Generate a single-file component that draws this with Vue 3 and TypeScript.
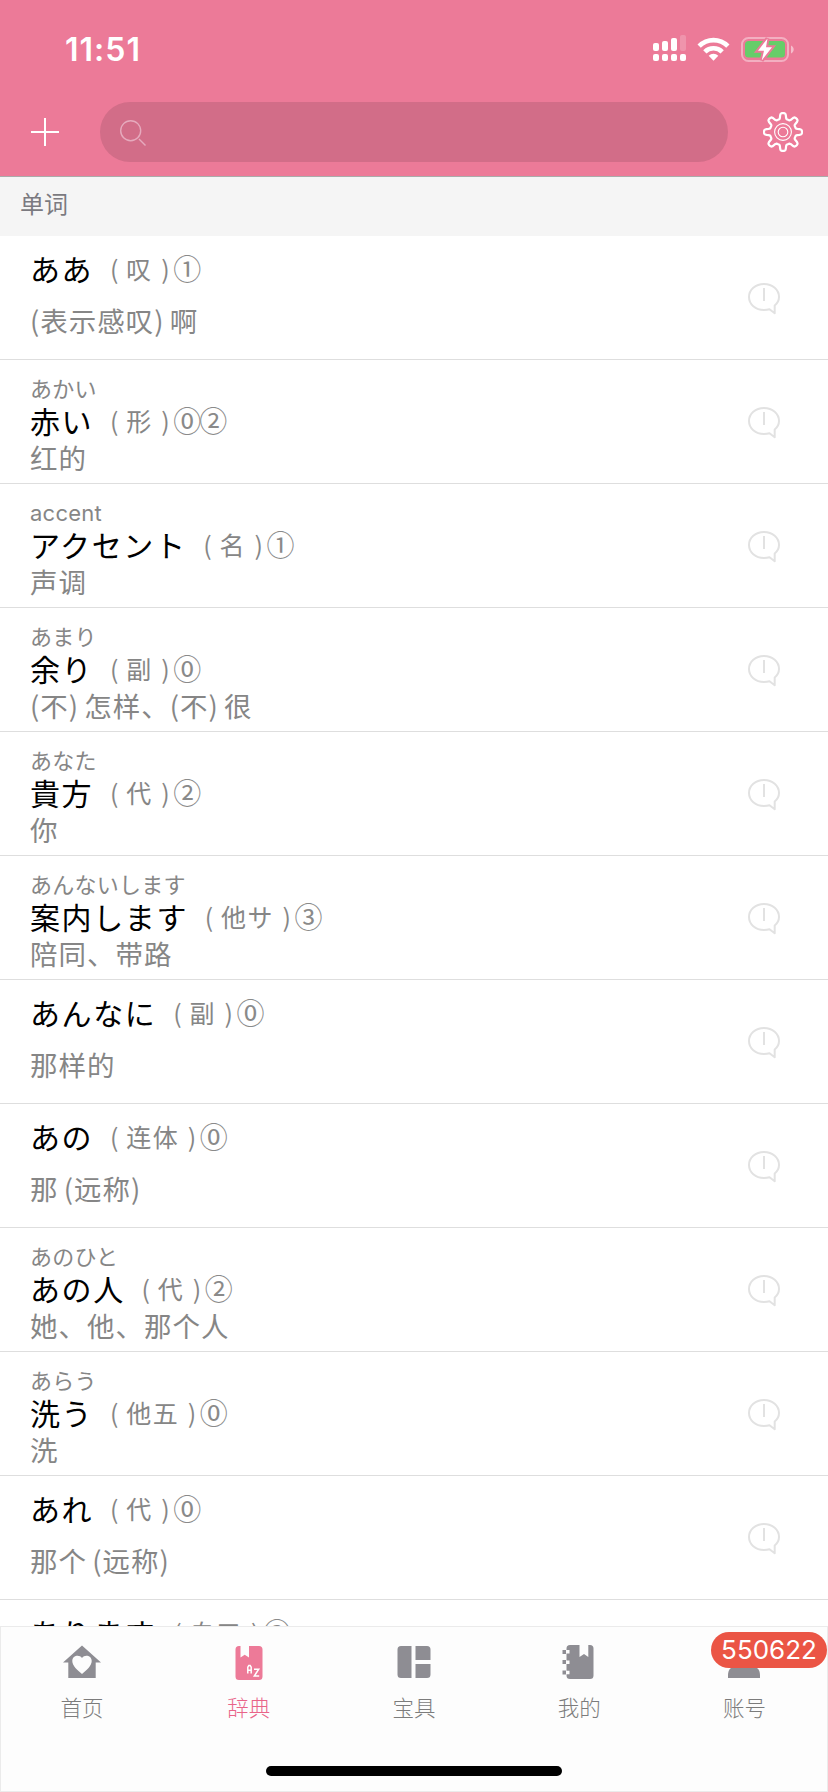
<script setup lang="ts">
interface Entry {
  kana?: string
  word: string
  kind: string
  tone: string
  meaning?: string
}

const entries: Entry[] = [
  { word: 'ああ', kind: '叹', tone: '①', meaning: '(表示感叹) 啊' },
  { kana: 'あかい', word: '赤い', kind: '形', tone: '⓪②', meaning: '红的' },
  { kana: 'accent', word: 'アクセント', kind: '名', tone: '①', meaning: '声调' },
  { kana: 'あまり', word: '余り', kind: '副', tone: '⓪', meaning: '(不) 怎样、(不) 很' },
  { kana: 'あなた', word: '貴方', kind: '代', tone: '②', meaning: '你' },
  { kana: 'あんないします', word: '案内します', kind: '他サ', tone: '③', meaning: '陪同、带路' },
  { word: 'あんなに', kind: '副', tone: '⓪', meaning: '那样的' },
  { word: 'あの', kind: '连体', tone: '⓪', meaning: '那 (远称)' },
  { kana: 'あのひと', word: 'あの人', kind: '代', tone: '②', meaning: '她、他、那个人' },
  { kana: 'あらう', word: '洗う', kind: '他五', tone: '⓪', meaning: '洗' },
  { word: 'あれ', kind: '代', tone: '⓪', meaning: '那个 (远称)' },
  { word: 'あります', kind: '自五', tone: '③' },
]

const gear = (() => {
  const pts: string[] = []
  for (let i = 0; i <= 360; i += 2) {
    const a = (i * Math.PI) / 180
    const wave = Math.tanh(2.4 * (Math.cos(8 * a) - 0.1)) / Math.tanh(2.4)
    const r = 16.1 + 2.9 * wave
    pts.push(`${(20 + r * Math.sin(a)).toFixed(2)} ${(20 - r * Math.cos(a)).toFixed(2)}`)
  }
  return `M${pts.join('L')}Z`
})()
</script>

<template>
  <div class="phone">
    <header class="top">
      <div class="status">
        <span class="time">11:51</span>
        <svg class="status-icons" width="144" height="30" viewBox="0 0 144 30">
          <g fill="#fff">
            <rect x="1" y="9" width="6" height="8" rx="2" />
            <rect x="10" y="7" width="6" height="10" rx="2" />
            <rect x="19" y="4" width="6" height="13" rx="2" />
            <rect x="28" y="1" width="6" height="16" rx="2" opacity=".2" />
            <rect x="1" y="20" width="6" height="7" rx="2" />
            <rect x="10" y="20" width="6" height="7" rx="2" />
            <rect x="19" y="20" width="6" height="7" rx="2" />
            <rect x="28" y="20" width="6" height="7" rx="2" />
            <path d="M45.500 10.500a22.300 22.300 0 0 1 32 0l-3.300 3.200a18 18 0 0 0-25.400 0z" />
            <path d="M51.200 16.200a14.700 14.700 0 0 1 20.600 0l-3.300 3.200a10 10 0 0 0-14 0z" />
            <path d="M56.700 21.700a7 7 0 0 1 9.600 0l-4.800 5.100z" />
          </g>
          <rect x="90" y="4" width="46" height="23" rx="6.500" fill="none" stroke="#fff" stroke-width="2" opacity=".4" />
          <path d="M139 11.500c3.600 1.500 3.600 6.500 0 8z" fill="#fff" opacity=".5" />
          <rect x="93" y="7" width="40" height="16.500" rx="3.500" fill="#66cd69" />
          <path d="M115.500 4.500 106 16.700h6l-2.300 9.800L120 13.200h-6z" fill="#fff" stroke="#eb7a98" stroke-width="4" paint-order="stroke" />
        </svg>
      </div>
      <div class="tools">
        <svg class="plus" width="30" height="30" viewBox="0 0 30 30">
          <path d="M1 15h28M15 1v28" stroke="#fff" stroke-width="2" />
        </svg>
        <div class="search">
          <svg width="28" height="28" viewBox="0 0 28 28" fill="none" stroke="#e6aabd" stroke-width="1.400">
            <circle cx="11.700" cy="11.700" r="10" />
            <path d="m20 20 6.500 6.500" />
          </svg>
        </div>
        <svg class="gear" width="40" height="40" viewBox="0 0 40 40" fill="none" stroke="#fff">
          <path :d="gear" stroke-width="2.200" stroke-linejoin="round" />
          <circle cx="20" cy="20" r="8.400" stroke-width="1.100" />
          <circle cx="20" cy="20" r="4.800" stroke-width="1.100" />
        </svg>
      </div>
    </header>

    <h2 class="section">单词</h2>

    <ul class="list">
      <li v-for="e in entries" :key="e.word" class="row" :class="{ plain: !e.kana }">
        <div class="body">
          <div v-if="e.kana" class="kana">{{ e.kana }}</div>
          <div class="head">
            <span class="word">{{ e.word }}</span>
            <span class="kind"><i>(</i><b>{{ e.kind }}</b><i class="close">)</i></span>
            <span v-for="(t, i) in e.tone" :key="i" class="tone">{{ t }}</span>
          </div>
          <div v-if="e.meaning" class="meaning">{{ e.meaning }}</div>
        </div>
        <svg class="bubble" width="34" height="34" viewBox="0 0 34 34" fill="none" stroke="#e2e2e2" stroke-width="2">
          <path d="M22.500 27.300C20.800 27.800 19 28 17 28 8.500 28 2 22.300 2 15S8.500 2 17 2s15 5.700 15 13c0 3.600-1.600 6.300-4.300 8.600V31.300z" stroke-linejoin="round" />
          <path d="M17 6v13" />
        </svg>
      </li>
    </ul>

    <nav class="tabs">
      <div class="tab home">
        <svg width="40" height="40" viewBox="0 0 40 40">
          <path d="M20 2.500 39 19.500h-5.300V35H6.300V19.500H1z" fill="#8e8d93" />
          <path d="M20 31C15.500 27 10.300 23 10.300 18c0-5.500 7-6.800 9.700-3 2.700-3.800 9.700-2.500 9.700 3 0 5-5.200 9-9.700 13z" fill="#fdfdfd" />
        </svg>
        <span>首页</span>
      </div>
      <div class="tab active">
        <svg width="40" height="40" viewBox="0 0 40 40">
          <path d="M10.500 3h1v11.500l4.200-2.800 4.300 2.800V3h10a3.500 3.500 0 0 1 3.500 3.500v27A3.500 3.500 0 0 1 30 37H10a3.500 3.500 0 0 1-3.500-3.500v-27A3.500 3.500 0 0 1 10 3z" fill="#ed7a98" />
          <path d="M18.800 30.500v-6.300l1-1.700h1.400l1 1.700v6.300M18.800 27.200h3.400M25 26.200h4.700L25.300 33h4.900" fill="none" stroke="#fff" stroke-width="1.500" />
        </svg>
        <span>辞典</span>
      </div>
      <div class="tab">
        <svg width="40" height="40" viewBox="0 0 40 40" fill="#8e8d93">
          <path d="M7 3h10.500v32H7a3.500 3.500 0 0 1-3.500-3.500v-25A3.500 3.500 0 0 1 7 3zM21.500 3H33a3.500 3.500 0 0 1 3.500 3.500V17h-15zM21.500 21h15v10.500A3.500 3.500 0 0 1 33 35H21.500z" />
        </svg>
        <span>宝具</span>
      </div>
      <div class="tab">
        <svg width="40" height="40" viewBox="0 0 40 40">
          <path d="M11 2h9.500v12l4.500-3 4.300 3V2H31a3.500 3.500 0 0 1 3.500 3.500v27A3.500 3.500 0 0 1 31 36H11a3.500 3.500 0 0 1-3.500-3.500v-27A3.500 3.500 0 0 1 11 2z" fill="#8e8d93" />
          <path d="M3.500 7H7v4H3.500zM3.500 17H7v4H3.500zM3.500 27.500H7v4H3.500z" fill="#8e8d93" />
          <path d="M7 7h3.500v3.500H7zM7 17.500h3.500V21H7zM7 27.800h3.500v3.500H7z" fill="#fdfdfd" />
        </svg>
        <span>我的</span>
      </div>
      <div class="tab">
        <svg width="40" height="40" viewBox="0 0 40 40" fill="#8e8d93">
          <circle cx="20" cy="12" r="9" />
          <path d="M4 35v-3c0-6 4-9 9-9h14c5 0 9 3 9 9v3z" />
        </svg>
        <span>账号</span>
        <em class="badge">550622</em>
      </div>
      <div class="indicator"></div>
    </nav>
  </div>
</template>

<style>
html,
body {
  margin: 0;
  background: #fff;
  overflow: hidden;
}
</style>

<style scoped>
.phone {
  width: 828px;
  height: 1792px;
  display: flex;
  flex-direction: column;
  position: relative;
  overflow: hidden;
  background: #fff;
  font-family: Inter, "Liberation Sans", "Noto Sans CJK SC", sans-serif;
}
.top {
  flex: none;
  box-sizing: border-box;
  height: 177px;
  background: #ec7a98;
  border-bottom: 1px solid #aaa;
}
.status {
  height: 102px;
  display: flex;
  justify-content: space-between;
  box-sizing: border-box;
  padding: 34px 32px 0 65px;
}
.time {
  font: 600 32px/32px Inter, sans-serif;
  letter-spacing: 1px;
  color: #fff;
}
.tools {
  display: flex;
  align-items: center;
  height: 60px;
  padding: 0 25px 0 30px;
}
.search {
  width: 628px;
  height: 60px;
  margin-left: 40px;
  box-sizing: border-box;
  padding: 2px 0 0 19px;
  border-radius: 30px;
  background: #d26d88;
  display: flex;
  align-items: center;
}
.gear {
  margin-left: auto;
}
.section {
  flex: none;
  margin: 0;
  height: 59px;
  box-sizing: border-box;
  padding-left: 20px;
  background: #f5f5f5;
  color: #7b7a80;
  font: 400 24px/52px "Noto Sans CJK SC", sans-serif;
}
.list {
  flex: none;
  margin: 0;
  padding: 0;
  list-style: none;
}
.row {
  height: 124px;
  box-sizing: border-box;
  border-bottom: 1px solid #dedede;
  display: flex;
  justify-content: space-between;
  padding: 13px 47px 0 30px;
}
.row.plain {
  padding-top: 16px;
}
.bubble {
  flex: none;
  margin-top: 33px;
}
.plain .bubble {
  margin-top: 30px;
}
.kana {
  height: 31px;
  font: 400 22px/32px Inter, "Noto Sans CJK JP", sans-serif;
  letter-spacing: 0.250px;
  color: #868686;
}
.head {
  display: flex;
  height: 32px;
  line-height: 32px;
  white-space: nowrap;
}
.word {
  font-family: "Noto Sans CJK JP", sans-serif;
  font-size: 30px;
  letter-spacing: 1.600px;
  color: #000;
}
.kind {
  display: flex;
  margin-left: 9px;
  font-family: "Noto Sans CJK SC", sans-serif;
  font-size: 25px;
  color: #868686;
}
.kind b {
  font-weight: 400;
  letter-spacing: 1.500px;
}
.kind i {
  font-style: normal;
  width: 24px;
  text-align: center;
}
.kind .close {
  width: 21.500px;
  padding-left: 4px;
  box-sizing: border-box;
}
.tone {
  width: 26px;
  display: flex;
  justify-content: center;
  font: 400 28px/32px "Noto Sans CJK SC", sans-serif;
  color: #8a8a8a;
}
.meaning {
  height: 42px;
  font: 400 27.500px/42px "Noto Sans CJK SC", sans-serif;
  letter-spacing: 1px;
  word-spacing: -2px;
  color: #868686;
}
.plain .meaning {
  margin-top: 15px;
}
.tabs {
  position: absolute;
  left: 0;
  bottom: 0;
  width: 828px;
  height: 166px;
  box-sizing: border-box;
  border: 1px solid #ebebeb;
  background: #fdfdfd;
  display: flex;
}
.tab {
  position: relative;
  flex: 1;
  display: flex;
  flex-direction: column;
  align-items: center;
  padding-top: 16px;
  font: 300 21.500px/40px "Noto Sans CJK SC", sans-serif;
  color: #7c7c7c;
}
.tab span {
  margin-top: 4px;
}
.home svg,
.home span {
  margin-right: 3px;
}
.tab.active {
  color: #e96489;
}
.badge {
  position: absolute;
  right: 0;
  top: 5px;
  width: 116px;
  height: 36px;
  border-radius: 18px;
  background: #eb5545;
  color: #fff;
  text-align: center;
  font: 400 26px/36px Inter, sans-serif;
}
.indicator {
  position: absolute;
  left: 265px;
  bottom: 15px;
  width: 296px;
  height: 10px;
  border-radius: 5px;
  background: #000;
}
</style>
